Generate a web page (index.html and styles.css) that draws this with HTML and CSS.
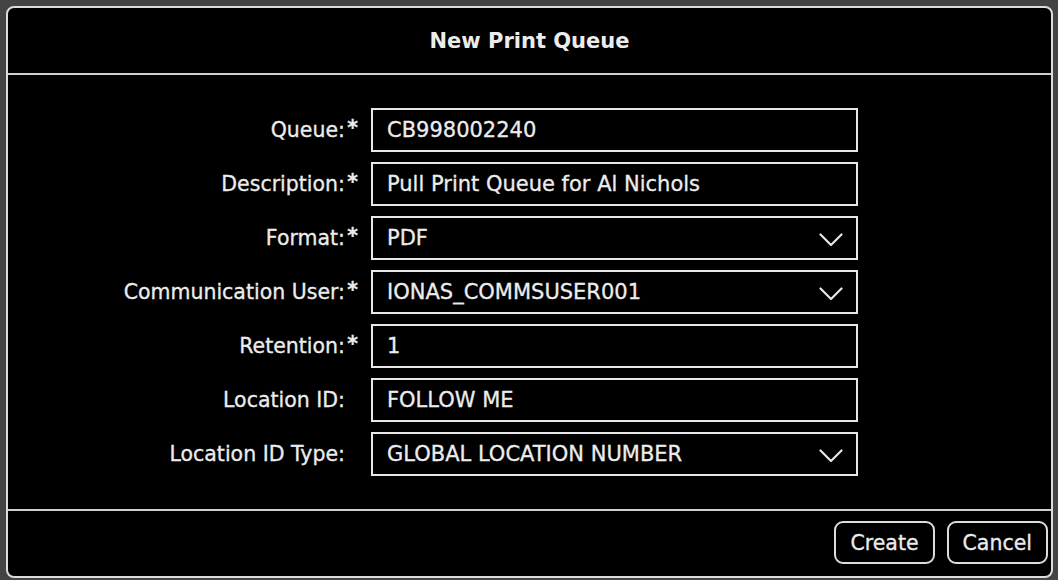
FILE: index.html
```html
<!DOCTYPE html>
<html lang="en">
<head>
<meta charset="utf-8">
<title>New Print Queue</title>
<link rel="stylesheet" href="styles.css">
</head>
<body>
<div class="dialog">
  <header class="dlg-header">New Print Queue</header>
  <div class="dlg-body">
    <form class="form">
      <label class="lbl">Queue:<span class="req">*</span></label>
      <div class="field"><span class="val">CB998002240</span></div>

      <label class="lbl">Description:<span class="req">*</span></label>
      <div class="field"><span class="val">Pull Print Queue for Al Nichols</span></div>

      <label class="lbl">Format:<span class="req">*</span></label>
      <div class="field select"><span class="val">PDF</span>
        <svg class="chev" viewBox="0 0 24 14" width="24" height="14"><polyline points="1.5,1.5 12,12 22.5,1.5"/></svg>
      </div>

      <label class="lbl">Communication User:<span class="req">*</span></label>
      <div class="field select"><span class="val">IONAS_COMMSUSER001</span>
        <svg class="chev" viewBox="0 0 24 14" width="24" height="14"><polyline points="1.5,1.5 12,12 22.5,1.5"/></svg>
      </div>

      <label class="lbl">Retention:<span class="req">*</span></label>
      <div class="field"><span class="val">1</span></div>

      <label class="lbl">Location ID:<span class="req"></span></label>
      <div class="field"><span class="val">FOLLOW ME</span></div>

      <label class="lbl">Location ID Type:<span class="req"></span></label>
      <div class="field select"><span class="val">GLOBAL LOCATION NUMBER</span>
        <svg class="chev" viewBox="0 0 24 14" width="24" height="14"><polyline points="1.5,1.5 12,12 22.5,1.5"/></svg>
      </div>
    </form>
  </div>
  <footer class="dlg-footer">
    <button class="btn" type="button">Create</button>
    <button class="btn" type="button">Cancel</button>
  </footer>
</div>
</body>
</html>
```

FILE: styles.css
```css
html, body {
  margin: 0;
  padding: 0;
  background: #444444;
  height: 580px;
  overflow: hidden;
}

body {
  font-family: "DejaVu Sans", "Liberation Sans", sans-serif;
  color: #ececec;
  padding: 6px 0 0 6px;
  box-sizing: border-box;
  -webkit-text-stroke: 0.3px #ececec;
}

.dialog {
  width: 1047px;
  height: 572px;
  box-sizing: border-box;
  border: 2px solid #dcdcdc;
  border-radius: 8px;
  background: #000;
  display: flex;
  flex-direction: column;
  overflow: hidden;
}

.dlg-header {
  height: 65px;
  flex: none;
  display: flex;
  align-items: center;
  justify-content: center;
  font-weight: bold;
  font-size: 21px;
  -webkit-text-stroke: 0;
  border-bottom: 2px solid #d0d0d0;
}

.dlg-body {
  flex: none;
  height: 434px;
  box-sizing: border-box;
  padding: 33px 0;
}

.form {
  margin: 0;
  display: grid;
  grid-template-columns: 350px 487px;
  grid-auto-rows: 44px;
  column-gap: 13px;
  row-gap: 10px;
}

.lbl {
  display: flex;
  justify-content: flex-end;
  align-items: center;
  font-size: 20.5px;
  white-space: nowrap;
}

.req {
  display: inline-block;
  width: 13px;
  text-align: right;
  font-weight: bold;
  align-self: center;
  margin-top: -4px;
}

.field {
  box-sizing: border-box;
  border: 2px solid #e6e6e6;
  display: flex;
  align-items: center;
  padding: 0 13px 0 14px;
  font-size: 21px;
  white-space: nowrap;
}

.val {
  flex: 1;
}

.chev {
  flex: none;
  margin-top: 4px;
  fill: none;
  stroke: #e6e6e6;
  stroke-width: 2.2;
  stroke-linecap: round;
  stroke-linejoin: round;
}

.dlg-footer {
  flex: 1;
  border-top: 2px solid #d0d0d0;
  display: flex;
  justify-content: flex-end;
  align-items: flex-start;
  gap: 12px;
  padding: 10px 3px 0 0;
}

.btn {
  height: 43px;
  background: #000;
  color: #ececec;
  border: 2px solid #dcdcdc;
  border-radius: 9px;
  font-family: "DejaVu Sans", "Liberation Sans", sans-serif;
  font-size: 20.5px;
  -webkit-text-stroke: 0.3px #ececec;
  padding: 0 14px;
  cursor: pointer;
}
```
